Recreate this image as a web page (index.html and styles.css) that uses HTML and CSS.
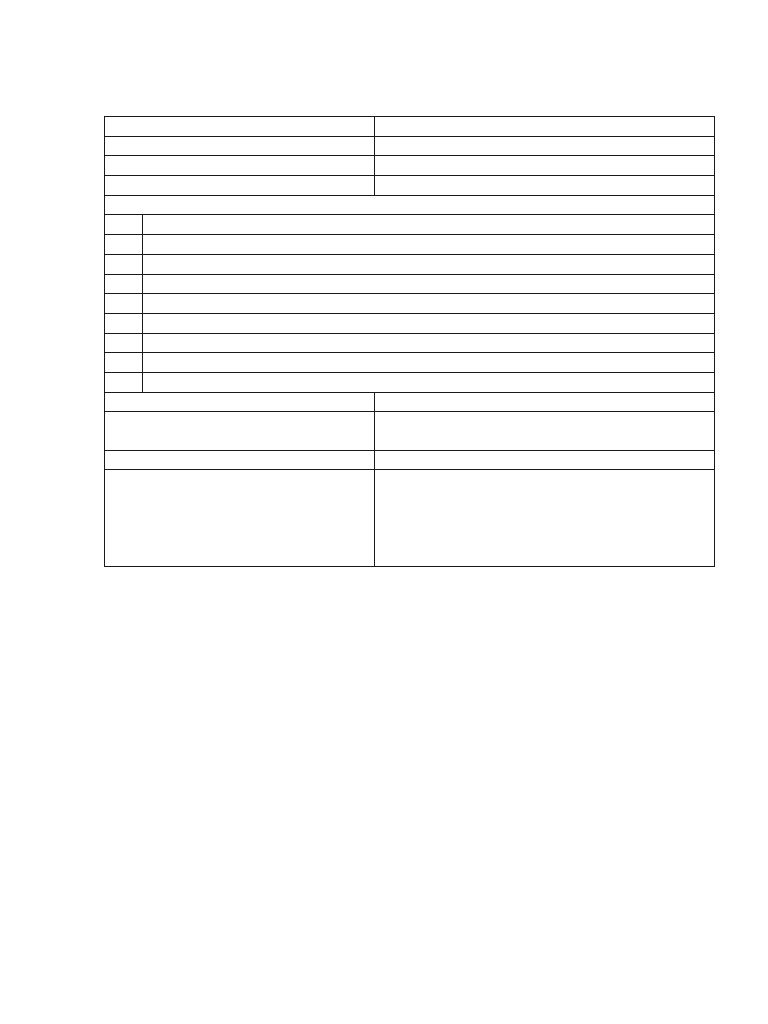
FILE: index.html
```html
<!DOCTYPE html>
<html>
<head>
<meta charset="utf-8">
<link rel="stylesheet" href="styles.css">
</head>
<body>
<table class="form">
  <colgroup>
    <col class="c-num">
    <col class="c-label">
    <col class="c-value">
  </colgroup>
  <tr><td colspan="2"></td><td></td></tr>
  <tr><td colspan="2"></td><td></td></tr>
  <tr><td colspan="2"></td><td></td></tr>
  <tr><td colspan="2"></td><td></td></tr>
  <tr><td colspan="3"></td></tr>
  <tr><td></td><td colspan="2"></td></tr>
  <tr><td></td><td colspan="2"></td></tr>
  <tr><td></td><td colspan="2"></td></tr>
  <tr><td></td><td colspan="2"></td></tr>
  <tr><td></td><td colspan="2"></td></tr>
  <tr><td></td><td colspan="2"></td></tr>
  <tr><td></td><td colspan="2"></td></tr>
  <tr><td></td><td colspan="2"></td></tr>
  <tr><td></td><td colspan="2"></td></tr>
  <tr><td colspan="2"></td><td></td></tr>
  <tr class="double"><td colspan="2"></td><td></td></tr>
  <tr><td colspan="2"></td><td></td></tr>
  <tr class="tall"><td colspan="2"></td><td></td></tr>
</table>
</body>
</html>
```
FILE: styles.css
```css
html, body {
  margin: 0;
  padding: 0;
  background: #fff;
  font-family: "Liberation Sans", Arial, sans-serif;
  font-size: 12px;
}
.form {
  border-collapse: collapse;
  table-layout: fixed;
  width: 610px;
  margin: 116px 0 0 104px;
}
.c-num { width: 38px; }
.c-label { width: 232px; }
.c-value { width: 340px; }
.form td {
  border: 1px solid #1a1a1a;
  padding: 0;
  height: 19.7px;
  box-sizing: border-box;
}
.form tr.double td { height: 38.2px; }
.form tr.tall td { height: 96.4px; }
```
